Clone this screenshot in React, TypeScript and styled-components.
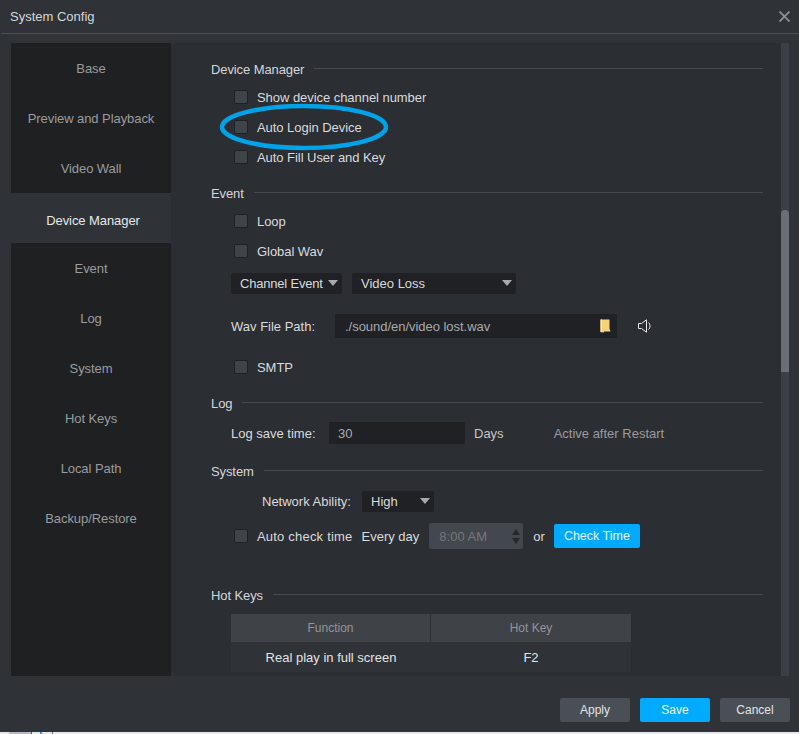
import React from 'react'
import styled, { createGlobalStyle } from 'styled-components'

const GlobalStyle = createGlobalStyle`
    html, body {
        margin: 0;
        padding: 0;
        background: #e4e7ec;
    }
    body {
        font-family: 'Liberation Sans', Arial, sans-serif;
        font-size: 13px;
        color: #d9dbde;
    }
    * {
        box-sizing: border-box;
    }
`

const menu = [
    'Base',
    'Preview and Playback',
    'Video Wall',
    'Device Manager',
    'Event',
    'Log',
    'System',
    'Hot Keys',
    'Local Path',
    'Backup/Restore',
]

const Caret = () => <CaretShape />

const Check = ({ label }: { label: string }) => (
    <CheckRow>
        <Box />
        <span>{label}</span>
    </CheckRow>
)

const Heading = ({ title }: { title: string }) => (
    <HeadingRow>
        <span>{title}</span>
        <HeadingLine />
    </HeadingRow>
)

const FolderIcon = () => (
    <svg width="11" height="14" viewBox="0 0 11 14">
        <path d="M0.5 0.5H9.5V9.5L10.5 12.5H4V13.5L0.5 13Z" fill="#f6d375" />
        <path d="M0.5 0.5H2V13.2L0.5 13Z" fill="#fbe6a6" />
    </svg>
)

const SpeakerIcon = () => (
    <svg width="14" height="14" viewBox="0 0 14 14" fill="none" stroke="#e6e7e9" strokeWidth="1">
        <path d="M0.5 4.5H3.5L8.5 0.8V13.2L3.5 9.5H0.5Z" />
        <path d="M10.5 3.5C12.5 5.5 12.5 8.5 10.5 10.5" />
    </svg>
)

export default function App() {
    return (
        <>
            <GlobalStyle />
            <Window>
                <TitleBar>
                    <Title>System Config</Title>
                    <svg width="11" height="11" viewBox="0 0 11 11" stroke="#8d9096" strokeWidth="1.8">
                        <path d="M0.5 0.5L10.5 10.5M10.5 0.5L0.5 10.5" />
                    </svg>
                </TitleBar>
                <Body>
                    <Sidebar>
                        {menu.map((item) => (
                            <MenuItem key={item} $active={item === 'Device Manager'}>
                                {item}
                            </MenuItem>
                        ))}
                    </Sidebar>
                    <Content>
                        <Section>
                            <Heading title="Device Manager" />
                            <Check label="Show device channel number" />
                            <Check label="Auto Login Device" />
                            <Check label="Auto Fill User and Key" />
                        </Section>
                        <Section>
                            <Heading title="Event" />
                            <Check label="Loop" />
                            <Check label="Global Wav" />
                            <SelectRow>
                                <Select $width={111}>
                                    <Tight>Channel Event</Tight>
                                    <Caret />
                                </Select>
                                <Select $width={164}>
                                    Video Loss
                                    <Caret />
                                </Select>
                            </SelectRow>
                            <PathRow>
                                <FieldLabel $width={104}>Wav File Path:</FieldLabel>
                                <PathInput>
                                    <span>./sound/en/video lost.wav</span>
                                    <FolderIcon />
                                </PathInput>
                                <SpeakerIcon />
                            </PathRow>
                            <Check label="SMTP" />
                        </Section>
                        <Section>
                            <Heading title="Log" />
                            <FormRow>
                                <FieldLabel $width={98}>Log save time:</FieldLabel>
                                <LogInput>30</LogInput>
                                <Days>Days</Days>
                                <Hint>Active after Restart</Hint>
                            </FormRow>
                        </Section>
                        <Section>
                            <Heading title="System" />
                            <NetworkRow>
                                <FieldLabel $width={100}>Network Ability:</FieldLabel>
                                <Select $width={72}>
                                    High
                                    <Caret />
                                </Select>
                            </NetworkRow>
                            <TimeRow>
                                <Box />
                                <AutoLabel>Auto check time</AutoLabel>
                                <span>Every day</span>
                                <TimeInput>
                                    8:00 AM
                                    <Spinner>
                                        <SpinUp />
                                        <SpinDown />
                                    </Spinner>
                                </TimeInput>
                                <Or>or</Or>
                                <CheckButton>Check Time</CheckButton>
                            </TimeRow>
                        </Section>
                        <HotKeys>
                            <Heading title="Hot Keys" />
                            <Table>
                                <HeadCell $divider>Function</HeadCell>
                                <HeadCell>Hot Key</HeadCell>
                                <Cell>Real play in full screen</Cell>
                                <Cell>F2</Cell>
                            </Table>
                        </HotKeys>
                        <Annotation width="172" height="50" viewBox="0 0 172 50" fill="none">
                            <ellipse cx="85" cy="24" rx="82" ry="21" stroke="#00a2e8" strokeWidth="4.5" />
                        </Annotation>
                    </Content>
                    <ScrollTrack>
                        <ScrollThumb />
                    </ScrollTrack>
                </Body>
                <Footer>
                    <FooterButton>Apply</FooterButton>
                    <FooterButton $primary>Save</FooterButton>
                    <FooterButton>Cancel</FooterButton>
                </Footer>
            </Window>
            <DesktopEdge />
        </>
    )
}

const Window = styled.div`
    width: 799px;
    height: 732px;
    background: #2f3237;
    display: flex;
    flex-direction: column;
    overflow: hidden;
`

const DesktopEdge = styled.div`
    width: 799px;
    height: 2px;
    background: linear-gradient(
        to right,
        #e4e7ec 9px,
        #b4bbc4 9px,
        #b4bbc4 31px,
        #55585c 31px,
        #55585c 32px,
        #e4e7ec 32px,
        #e4e7ec 40px,
        #4f8fd8 40px,
        #4f8fd8 42px,
        #e4e7ec 42px,
        #e4e7ec 52px,
        #6d7075 52px,
        #6d7075 53px,
        #e4e7ec 53px
    );
`

const TitleBar = styled.div`
    height: 34px;
    margin-left: 1px;
    padding: 0 9px 0 9px;
    border-bottom: 1px solid #4b4e53;
    display: flex;
    align-items: center;
    justify-content: space-between;
`

const Title = styled.div`
    color: #d5d7da;
`

const Body = styled.div`
    height: 633px;
    margin: 9px 10px 0 11px;
    display: flex;
`

const Sidebar = styled.div`
    width: 160px;
    background: #1f2022;
    flex-shrink: 0;
`

const MenuItem = styled.div<{ $active?: boolean }>`
    height: 50px;
    display: flex;
    align-items: center;
    justify-content: center;
    letter-spacing: -0.07px;
    color: ${(props) => (props.$active ? '#e6e8ea' : '#9a9c9f')};
    background: ${(props) => (props.$active ? '#2f3237' : 'transparent')};
    padding: ${(props) => (props.$active ? '4px 0 0 4px' : '0')};
`

const Content = styled.div`
    position: relative;
    flex: 1;
    min-width: 0;
    background: #2b2e33;
    padding: 16px 18px 0 40px;
    overflow: hidden;
`

const Section = styled.div`
    margin-bottom: 11px;
`

const HotKeys = styled.div`
    margin-top: 31px;
`

const HeadingRow = styled.div`
    height: 20px;
    margin-bottom: 3px;
    display: flex;
    align-items: center;
    gap: 10px;
    color: #d5d7da;
    letter-spacing: -0.1px;
`

const HeadingLine = styled.div`
    flex: 1;
    height: 1px;
    margin-top: -2px;
    background: #454951;
`

const CheckRow = styled.div`
    height: 30px;
    padding-left: 23px;
    display: flex;
    align-items: center;
    gap: 9px;
    color: #d9dbde;
    letter-spacing: -0.05px;
`

const Box = styled.div`
    width: 14px;
    height: 14px;
    flex-shrink: 0;
    background: #3f434a;
    border: 1px solid #1f2124;
    border-radius: 2px;
`

const SelectRow = styled.div`
    height: 34px;
    padding-left: 20px;
    display: flex;
    align-items: center;
    gap: 10px;
`

const Select = styled.div<{ $width: number }>`
    width: ${(props) => props.$width}px;
    height: 21px;
    padding: 0 4px 0 9px;
    background: #1f2124;
    border-radius: 2px;
    display: flex;
    align-items: center;
    justify-content: space-between;
    color: #d9dbde;
`

const Tight = styled.span`
    letter-spacing: -0.2px;
`

const CaretShape = styled.span`
    width: 0;
    height: 0;
    border-left: 5px solid transparent;
    border-right: 5px solid transparent;
    border-top: 6px solid #a7a9ae;
`

const PathRow = styled.div`
    height: 30px;
    margin: 11px 0;
    padding-left: 20px;
    display: flex;
    align-items: center;
    gap: 21px;
`

const FieldLabel = styled.span<{ $width: number }>`
    width: ${(props) => props.$width}px;
    margin-right: -21px;
    flex-shrink: 0;
    color: #d9dbde;
`

const PathInput = styled.div`
    width: 282px;
    height: 24px;
    padding: 0 6px 0 10px;
    background: #1f2124;
    display: flex;
    align-items: center;
    justify-content: space-between;
    color: #a9abae;
    letter-spacing: -0.03px;
`

const FormRow = styled.div`
    height: 34px;
    padding-left: 20px;
    display: flex;
    align-items: center;
    gap: 21px;
`

const LogInput = styled.div`
    width: 136px;
    height: 22px;
    padding-left: 9px;
    background: #1f2124;
    display: flex;
    align-items: center;
    color: #a9abae;
`

const Days = styled.span`
    margin-left: -12px;
    color: #c4c6c9;
`

const Hint = styled.span`
    margin-left: 29px;
    color: #9a9c9f;
`

const NetworkRow = styled.div`
    height: 34px;
    padding-left: 51px;
    display: flex;
    align-items: center;
    gap: 21px;
`

const TimeRow = styled.div`
    height: 36px;
    padding-left: 23px;
    display: flex;
    align-items: center;
    gap: 9px;
    color: #d9dbde;
`

const AutoLabel = styled.span`
    letter-spacing: 0.2px;
`

const TimeInput = styled.div`
    width: 94px;
    height: 26px;
    margin-left: 1px;
    padding: 0 3px 0 10px;
    background: #43474e;
    border-radius: 2px;
    display: flex;
    align-items: center;
    justify-content: space-between;
    color: #74777c;
`

const Spinner = styled.div`
    display: flex;
    flex-direction: column;
    gap: 3px;
`

const SpinUp = styled.span`
    width: 0;
    height: 0;
    border-left: 4px solid transparent;
    border-right: 4px solid transparent;
    border-bottom: 6px solid #25272b;
`

const SpinDown = styled.span`
    width: 0;
    height: 0;
    border-left: 4px solid transparent;
    border-right: 4px solid transparent;
    border-top: 6px solid #25272b;
`

const Or = styled.span`
    margin-left: 1px;
`

const CheckButton = styled.button`
    width: 86px;
    height: 24px;
    padding: 0;
    border: 0;
    border-radius: 2px;
    background: #00aaff;
    color: #e6f5ff;
    font: inherit;
    font-size: 12.5px;
`

const Table = styled.div`
    width: 400px;
    margin: 9px 0 0 20px;
    display: grid;
    grid-template-columns: 1fr 1fr;
`

const HeadCell = styled.div<{ $divider?: boolean }>`
    height: 28px;
    display: flex;
    align-items: center;
    justify-content: center;
    background: #3f4247;
    color: #92959a;
    font-size: 12px;
    border-right: ${(props) => (props.$divider ? '1px solid #2b2e33' : '0')};
`

const Cell = styled.div`
    height: 30px;
    display: flex;
    align-items: center;
    justify-content: center;
    background: #2f3237;
    color: #e2e4e6;
`

const Annotation = styled.svg`
    position: absolute;
    left: 48px;
    top: 60px;
`

const ScrollTrack = styled.div`
    width: 8px;
    flex-shrink: 0;
    background: #3c3f45;
`

const ScrollThumb = styled.div`
    width: 8px;
    height: 162px;
    margin-top: 167px;
    background: #6a6f77;
    border-radius: 4px 4px 0 0;
`

const Footer = styled.div`
    padding: 22px 9px 0 0;
    display: flex;
    justify-content: flex-end;
    gap: 10px;
`

const FooterButton = styled.button<{ $primary?: boolean }>`
    width: 70px;
    height: 24px;
    padding: 0;
    border: 0;
    border-radius: 2px;
    background: ${(props) => (props.$primary ? '#00aaff' : '#4a4f56')};
    color: ${(props) => (props.$primary ? '#f0f9ff' : '#e2e4e6')};
    font: inherit;
    font-size: 12px;
`
